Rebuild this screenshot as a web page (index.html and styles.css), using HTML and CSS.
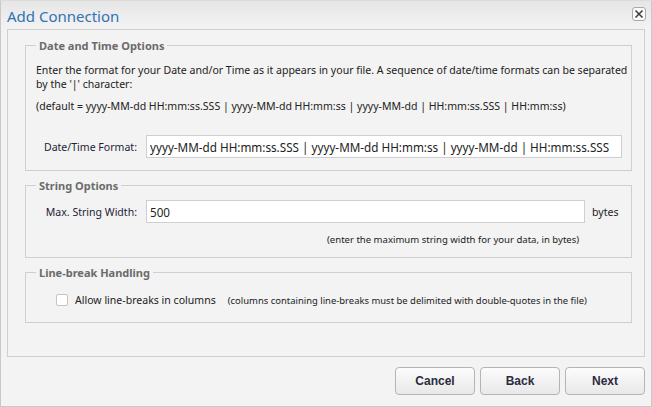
FILE: index.html
```html
<!DOCTYPE html>
<html lang="en">
<head>
    <meta charset="UTF-8">
    <title>Add Connection</title>
    <link rel="stylesheet" href="styles.css">
</head>
<body>
    <div class="dialog">
        <div class="titlebar">
            <span class="title">Add Connection</span>
            <span class="close-btn">
                <svg width="10" height="10" viewBox="0 0 10 10">
                    <path d="M1.5 1.5 L8.5 8.5 M8.5 1.5 L1.5 8.5" stroke="#3a3a3a" stroke-width="1.5" fill="none"/>
                </svg>
            </span>
        </div>
        <div class="panel">
            <div class="group group-date">
                <div class="group-title">Date and Time Options</div>
                <p class="desc">Enter the format for your Date and/or Time as it appears in your file. A sequence of date/time formats can be separated<br>by the '|' character:</p>
                <p class="desc default">(default = yyyy-MM-dd HH:mm:ss.SSS | yyyy-MM-dd HH:mm:ss | yyyy-MM-dd | HH:mm:ss.SSS | HH:mm:ss)</p>
                <div class="form-row">
                    <label for="dt-format">Date/Time Format:</label>
                    <input type="text" id="dt-format" class="field" value="yyyy-MM-dd HH:mm:ss.SSS | yyyy-MM-dd HH:mm:ss | yyyy-MM-dd | HH:mm:ss.SSS">
                </div>
            </div>
            <div class="group group-string">
                <div class="group-title">String Options</div>
                <div class="form-row">
                    <label for="str-width">Max. String Width:</label>
                    <input type="text" id="str-width" class="field field-short" value="500">
                    <span class="unit">bytes</span>
                </div>
                <div class="hint">(enter the maximum string width for your data, in bytes)</div>
            </div>
            <div class="group group-break">
                <div class="group-title">Line-break Handling</div>
                <div class="check-row">
                    <span class="checkbox"></span>
                    <span class="check-label">Allow line-breaks in columns</span>
                    <span class="check-note">(columns containing line-breaks must be delimited with double-quotes in the file)</span>
                </div>
            </div>
        </div>
        <div class="buttons">
            <button>Cancel</button>
            <button>Back</button>
            <button>Next</button>
        </div>
    </div>
</body>
</html>
```
FILE: styles.css
```css
body {
    margin: 0;
    background: #f3f3f3;
    font-family: "Noto Sans", "DejaVu Sans", sans-serif;
    color: #222;
}

.dialog {
    width: 652px;
    height: 407px;
    box-sizing: border-box;
    border: 1px solid #c9c9c9;
    border-top-color: #dcdcdc;
    background: #f3f3f3;
}

.titlebar {
    height: 28px;
    display: flex;
    justify-content: space-between;
    padding: 0 5px 0 6px;
    background: linear-gradient(#e6e6e6, #f3f3f3);
}

.title {
    font-size: 15px;
    line-height: 20px;
    margin-top: 5px;
    color: #3172b5;
}

.close-btn {
    width: 12px;
    height: 12px;
    margin-top: 6px;
    border: 1px solid #a9a9a9;
    border-radius: 3px;
    background: #fafafa;
    display: flex;
    align-items: center;
    justify-content: center;
}

.panel {
    margin: 0 6px;
    height: 328px;
    box-sizing: border-box;
    border: 1px solid #cfcfcf;
    padding: 15px 12px 0 17px;
}

.group {
    border: 1px solid #cfcfcf;
    padding: 0 4px 0 10px;
}

.group + .group {
    margin-top: 14px;
}

.group-title {
    width: fit-content;
    margin: -8px 0 0 0;
    padding: 0 3px;
    background: #f3f3f3;
    font-size: 11px;
    line-height: 16px;
    font-weight: bold;
    color: #6b6b6b;
}

.group-date {
    padding-bottom: 12px;
}

.group-string {
    padding-bottom: 10px;
}

.group-break {
    padding-bottom: 15px;
}

.desc {
    margin: 9px 0 0;
    font-size: 10.55px;
    line-height: 14px;
    white-space: nowrap;
}

.desc.default {
    margin-top: 8px;
}

.form-row {
    display: flex;
    align-items: center;
}

.group-date .form-row {
    margin-top: 22px;
}

.group-string .form-row {
    margin-top: 6px;
}

.form-row label {
    width: 101px;
    text-align: right;
    font-size: 10.55px;
    margin-right: 9px;
    color: #1e1e38;
}

.field {
    height: 23px;
    box-sizing: border-box;
    border: 1px solid #cfcfcf;
    background: #fff;
    padding: 0 3px;
    font-family: "Noto Sans", sans-serif;
    font-size: 11.7px;
    color: #222;
    width: 476px;
    outline: none;
}

.field-short {
    width: 439px;
}

.unit {
    font-size: 10.55px;
    margin-left: 7px;
}

.hint {
    font-size: 9.55px;
    line-height: 14px;
    margin: 10px 0 0 291px;
}

.check-row {
    display: flex;
    align-items: center;
    height: 14px;
    margin: 12px 0 0 20px;
}

.checkbox {
    width: 10px;
    height: 10px;
    border: 1px solid #c4c4c4;
    border-radius: 2px;
    background: #fff;
    margin-right: 7px;
}

.check-label {
    font-size: 10.55px;
    margin-right: 12px;
}

.check-note {
    font-size: 9.45px;
}

.buttons {
    display: flex;
    justify-content: flex-end;
    gap: 5px;
    padding: 10px 6px 0 0;
}

.buttons button {
    width: 80px;
    height: 28px;
    border: 1px solid #b4b4b4;
    border-radius: 4px;
    background: linear-gradient(#fcfcfc, #e8e8e8);
    font-family: "Liberation Sans", Arial, sans-serif;
    font-size: 12px;
    font-weight: bold;
    color: #2b2b40;
}
```
